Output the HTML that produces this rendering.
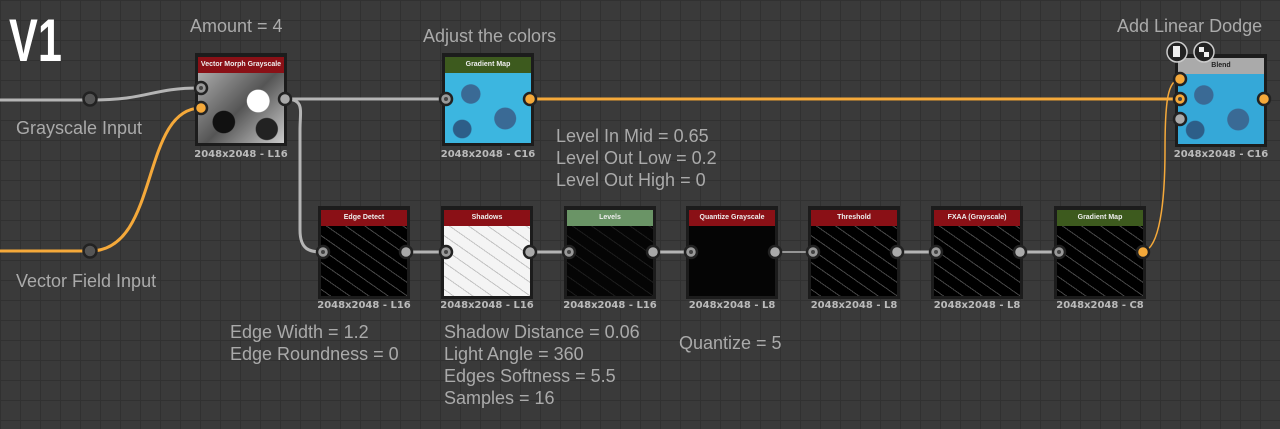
<!DOCTYPE html>
<html><head><style>
body{margin:0;width:1280px;height:429px;overflow:hidden;background:#3a3a3a;
background-image:linear-gradient(#313131 1px,transparent 1px),linear-gradient(90deg,#313131 1px,transparent 1px);background-size:20px 20px;font-family:"Liberation Sans",sans-serif;position:relative}
.t{position:absolute;color:#aaa;font-size:18px;line-height:22px;white-space:nowrap}
.n{position:absolute;width:86px;height:86px;background:#1c1c1c;border:3px solid #1c1c1c;border-top-width:4px}
.h{height:16px;font-size:7px;font-weight:bold;color:#eee;text-align:center;line-height:16px;background:#8a1016}
.img{height:70px}
.bk{background:#000 repeating-linear-gradient(35deg,transparent 0 5px,rgba(200,200,200,.35) 5px 6px,transparent 6px 11px)}
.blue{background:radial-gradient(circle at 30% 30%,#3a6a95 0 12%,transparent 13%),radial-gradient(circle at 70% 65%,#3a6a95 0 14%,transparent 15%),radial-gradient(circle at 20% 80%,#2d5e88 0 10%,transparent 11%),#3cb6e0}
.sz{position:absolute;color:#bbb;font-size:10px;font-weight:bold;font-family:"DejaVu Sans",sans-serif;width:100px;text-align:center}
svg{position:absolute;left:0;top:0}
</style></head><body>
<svg width="1280" height="429">
<g fill="none" stroke-width="3">
<path d="M0 100 H90 C150 100 150 88 200 88" stroke="#b5b5b5"/>
<path d="M0 251 H90 C160 251 140 110 200 108" stroke="#f5a93a"/>
<path d="M285 99 H446" stroke="#b5b5b5"/>
<path d="M285 99 C305 99 300 110 300 130 V230 C300 250 310 252 322 252" stroke="#b5b5b5"/>
<path d="M405 252 H446 M528 252 H568 M650 252 H690 M897 252 H935 M1020 252 H1058" stroke="#b5b5b5"/>
<path d="M773 252 H812" stroke="#b5b5b5" stroke-width="1.5"/>
<path d="M530 99 H1180" stroke="#f5a93a"/>
<path d="M1142 252 C1160 250 1165 200 1165 150 C1165 100 1168 80 1180 79" stroke="#f5a93a" stroke-width="1.5"/>
</g>
</svg>
<div style="position:absolute;left:9px;top:10px;color:#fff;font-size:60px;font-weight:bold;line-height:62px;transform:scaleX(.72);transform-origin:left">V1</div>
<div class="t" style="left:190px;top:15px">Amount = 4</div>
<div class="t" style="left:423px;top:25px">Adjust the colors</div>
<div class="t" style="left:1117px;top:15px">Add Linear Dodge</div>
<div class="t" style="left:16px;top:117px">Grayscale Input</div>
<div class="t" style="left:16px;top:270px">Vector Field Input</div>
<div class="t" style="left:556px;top:125px">Level In Mid = 0.65<br>Level Out Low = 0.2<br>Level Out High = 0</div>
<div class="t" style="left:230px;top:321px">Edge Width = 1.2<br>Edge Roundness = 0</div>
<div class="t" style="left:444px;top:321px">Shadow Distance = 0.06<br>Light Angle = 360<br>Edges Softness = 5.5<br>Samples = 16</div>
<div class="t" style="left:679px;top:332px">Quantize = 5</div>

<div class="n" style="left:195px;top:53px"><div class="h">Vector Morph Grayscale</div><div class="img" style="background:radial-gradient(circle at 70% 40%,#fff 0 15%,transparent 16%),radial-gradient(circle at 30% 70%,#111 0 14%,transparent 15%),radial-gradient(circle at 80% 80%,#222 0 12%,transparent 13%),linear-gradient(135deg,#aaa,#555 50%,#ccc)"></div></div>
<div class="sz" style="left:191px;top:149px">2048x2048 - L16</div>
<div class="n" style="left:442px;top:53px"><div class="h" style="background:#3d5a1e">Gradient Map</div><div class="img blue"></div></div>
<div class="sz" style="left:438px;top:149px">2048x2048 - C16</div>
<div class="n" style="left:1175px;top:54px"><div class="h" style="background:#aaa;color:#222">Blend</div><div class="img blue" style="background-color:#35a8d8"></div></div>
<div class="sz" style="left:1171px;top:149px">2048x2048 - C16</div>

<div class="n" style="left:318px;top:206px"><div class="h">Edge Detect</div><div class="img bk"></div></div>
<div class="sz" style="left:314px;top:300px">2048x2048 - L16</div>
<div class="n" style="left:441px;top:206px"><div class="h">Shadows</div><div class="img" style="background:#f4f4f4 repeating-linear-gradient(35deg,transparent 0 5px,rgba(80,80,80,.3) 5px 6px,transparent 6px 11px)"></div></div>
<div class="sz" style="left:437px;top:300px">2048x2048 - L16</div>
<div class="n" style="left:564px;top:206px"><div class="h" style="background:#6a9466">Levels</div><div class="img" style="background:#050505 repeating-linear-gradient(35deg,transparent 0 5px,rgba(200,200,200,.12) 5px 6px,transparent 6px 11px)"></div></div>
<div class="sz" style="left:560px;top:300px">2048x2048 - L16</div>
<div class="n" style="left:686px;top:206px"><div class="h">Quantize Grayscale</div><div class="img" style="background:#050505"></div></div>
<div class="sz" style="left:682px;top:300px">2048x2048 - L8</div>
<div class="n" style="left:808px;top:206px"><div class="h">Threshold</div><div class="img bk"></div></div>
<div class="sz" style="left:804px;top:300px">2048x2048 - L8</div>
<div class="n" style="left:931px;top:206px"><div class="h">FXAA (Grayscale)</div><div class="img bk"></div></div>
<div class="sz" style="left:927px;top:300px">2048x2048 - L8</div>
<div class="n" style="left:1054px;top:206px"><div class="h" style="background:#3d5a1e">Gradient Map</div><div class="img bk"></div></div>
<div class="sz" style="left:1050px;top:300px">2048x2048 - C8</div>

<svg width="1280" height="429">
<g stroke="#222" stroke-width="2.5">
<circle cx="90" cy="99" r="6.5" fill="#555"/><circle cx="90" cy="251" r="6.5" fill="#555"/>
<circle cx="201" cy="88" r="6" fill="#999"/><circle cx="201" cy="108" r="6" fill="#f5a93a"/><circle cx="285" cy="99" r="6" fill="#aaa"/>
<circle cx="446" cy="99" r="6" fill="#999"/><circle cx="530" cy="99" r="6" fill="#f5a93a"/>
<circle cx="1180" cy="79" r="6" fill="#f5a93a"/><circle cx="1180" cy="99" r="6" fill="#f5a93a"/><circle cx="1180" cy="119" r="6" fill="#aaa"/><circle cx="1264" cy="99" r="6" fill="#f5a93a"/>
<circle cx="323" cy="252" r="6" fill="#999"/><circle cx="406" cy="252" r="6" fill="#aaa"/>
<circle cx="446" cy="252" r="6" fill="#999"/><circle cx="530" cy="252" r="6" fill="#aaa"/>
<circle cx="569" cy="252" r="6" fill="#999"/><circle cx="653" cy="252" r="6" fill="#aaa"/>
<circle cx="691" cy="252" r="6" fill="#999"/><circle cx="775" cy="252" r="6" fill="#aaa"/>
<circle cx="813" cy="252" r="6" fill="#999"/><circle cx="897" cy="252" r="6" fill="#aaa"/>
<circle cx="936" cy="252" r="6" fill="#999"/><circle cx="1020" cy="252" r="6" fill="#aaa"/>
<circle cx="1059" cy="252" r="6" fill="#999"/><circle cx="1143" cy="252" r="6" fill="#f5a93a"/>
<circle cx="1177" cy="52" r="10" fill="#222" stroke="#ccc" stroke-width="1.5"/><circle cx="1204" cy="52" r="10" fill="#222" stroke="#ccc" stroke-width="1.5"/>
</g>
<g fill="#444"><circle cx="201" cy="88" r="2"/><circle cx="446" cy="99" r="2"/><circle cx="323" cy="252" r="2"/><circle cx="446" cy="252" r="2"/><circle cx="569" cy="252" r="2"/><circle cx="691" cy="252" r="2"/><circle cx="813" cy="252" r="2"/><circle cx="936" cy="252" r="2"/><circle cx="1059" cy="252" r="2"/><circle cx="1180" cy="99" r="2"/></g>
<rect x="1173" y="46" width="7" height="11" fill="#eee"/><rect x="1199" y="47" width="5" height="5" fill="#eee"/><rect x="1204" y="52" width="5" height="5" fill="#eee"/>
</svg>
</body></html>
